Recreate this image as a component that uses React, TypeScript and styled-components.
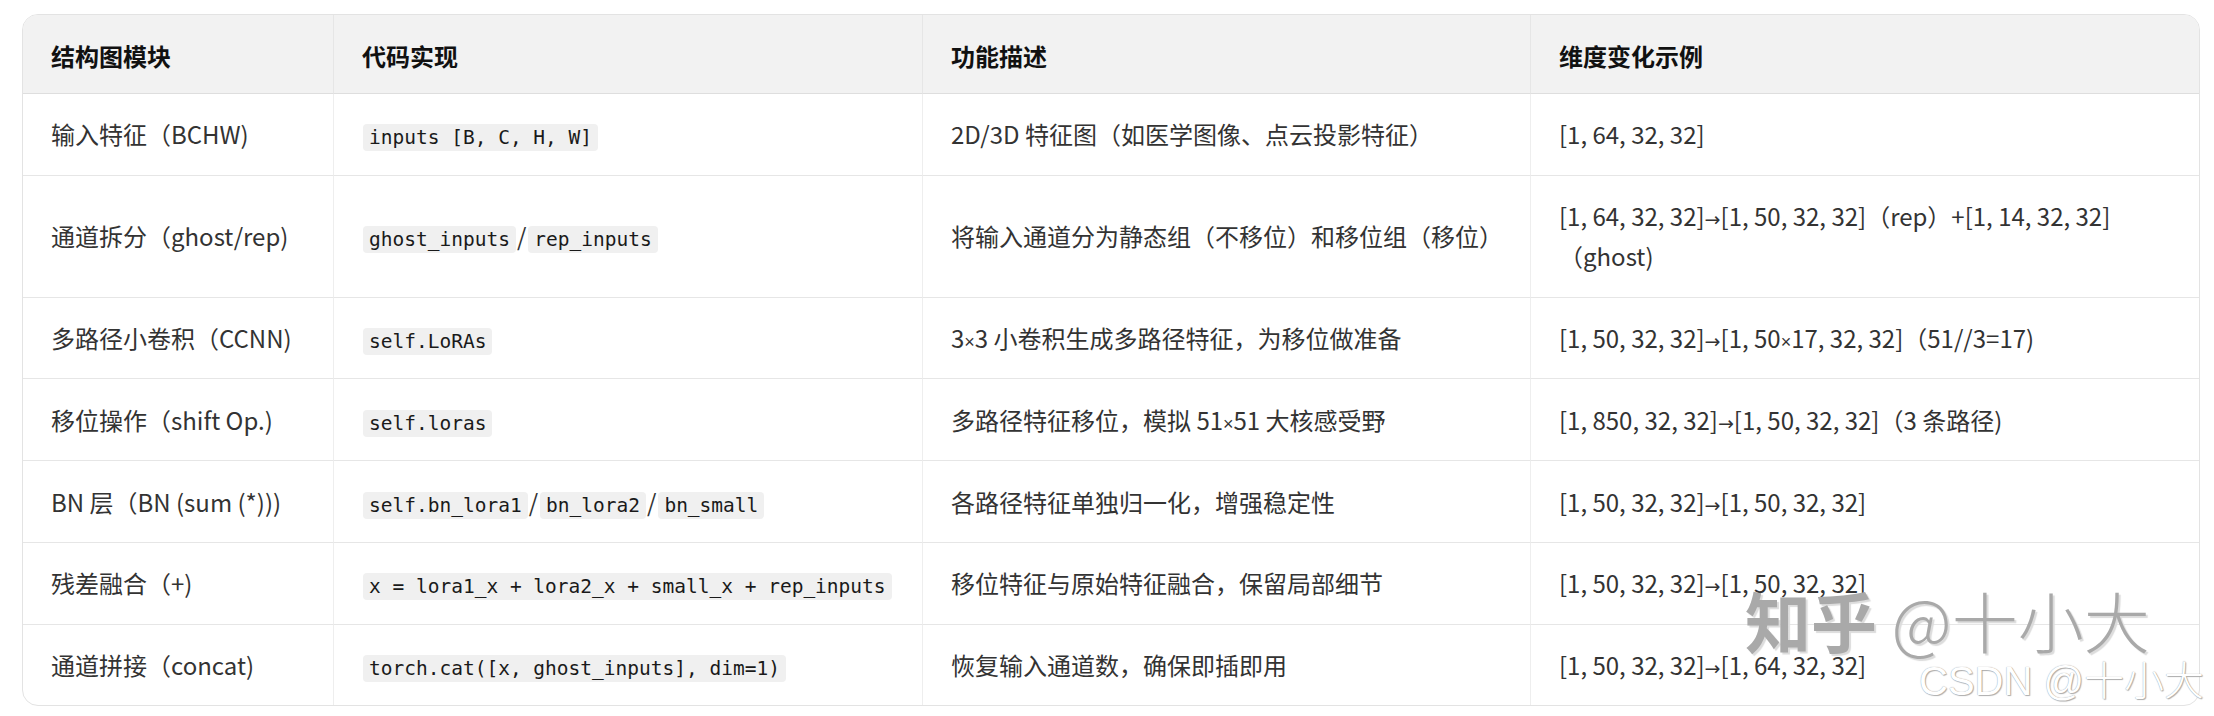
import React from "react";
import styled, { createGlobalStyle } from "styled-components";

interface Row {
    module: string;
    code: string[];
    desc: string;
    dims: string;
}

const rows: Row[] = [
    {
        module: "输入特征（BCHW)",
        code: ["inputs [B, C, H, W]"],
        desc: "2D/3D 特征图（如医学图像、点云投影特征）",
        dims: "[1, 64, 32, 32]",
    },
    {
        module: "通道拆分（ghost/rep)",
        code: ["ghost_inputs", "rep_inputs"],
        desc: "将输入通道分为静态组（不移位）和移位组（移位）",
        dims: "[1, 64, 32, 32]→[1, 50, 32, 32]（rep）+[1, 14, 32, 32]（ghost)",
    },
    {
        module: "多路径小卷积（CCNN)",
        code: ["self.LoRAs"],
        desc: "3×3 小卷积生成多路径特征，为移位做准备",
        dims: "[1, 50, 32, 32]→[1, 50×17, 32, 32]（51//3=17)",
    },
    {
        module: "移位操作（shift Op.)",
        code: ["self.loras"],
        desc: "多路径特征移位，模拟 51×51 大核感受野",
        dims: "[1, 850, 32, 32]→[1, 50, 32, 32]（3 条路径)",
    },
    {
        module: "BN 层（BN (sum (*)))",
        code: ["self.bn_lora1", "bn_lora2", "bn_small"],
        desc: "各路径特征单独归一化，增强稳定性",
        dims: "[1, 50, 32, 32]→[1, 50, 32, 32]",
    },
    {
        module: "残差融合（+)",
        code: ["x = lora1_x + lora2_x + small_x + rep_inputs"],
        desc: "移位特征与原始特征融合，保留局部细节",
        dims: "[1, 50, 32, 32]→[1, 50, 32, 32]",
    },
    {
        module: "通道拼接（concat)",
        code: ["torch.cat([x, ghost_inputs], dim=1)"],
        desc: "恢复输入通道数，确保即插即用",
        dims: "[1, 50, 32, 32]→[1, 64, 32, 32]",
    },
];

const colWidths = [310, 589, 608, 669];

// × and → are narrow in the source font, the CJK font draws them full width
const withSymbols = (text: string) =>
    text.split(/([→×])/).map((part, i) =>
        part === "→" ? (
            <Arrow key={i}>{part}</Arrow>
        ) : part === "×" ? (
            <Times key={i}>{part}</Times>
        ) : (
            part
        )
    );

const App: React.FC = () => {
    return (
        <Page>
            <GlobalStyle />
            <TableWrap>
                <Table>
                    <colgroup>
                        {colWidths.map((w, i) => (
                            <col key={i} style={{ width: w }} />
                        ))}
                    </colgroup>
                    <thead>
                        <tr>
                            <HeadCell>结构图模块</HeadCell>
                            <HeadCell>代码实现</HeadCell>
                            <HeadCell>功能描述</HeadCell>
                            <HeadCell>维度变化示例</HeadCell>
                        </tr>
                    </thead>
                    <tbody>
                        {rows.map((r) => (
                            <BodyRow key={r.module}>
                                <Cell>{r.module}</Cell>
                                <Cell>
                                    {r.code.map((c, i) => (
                                        <React.Fragment key={c}>
                                            {i > 0 && <Slash>/</Slash>}
                                            <Code>{c}</Code>
                                        </React.Fragment>
                                    ))}
                                </Cell>
                                <Cell>{withSymbols(r.desc)}</Cell>
                                <Cell>{withSymbols(r.dims)}</Cell>
                            </BodyRow>
                        ))}
                    </tbody>
                </Table>
            </TableWrap>
            <Watermark>
                <ZhihuMark>
                    <b>知乎</b> @十小大
                </ZhihuMark>
                <CsdnMark>CSDN @十小大</CsdnMark>
            </Watermark>
        </Page>
    );
};

const GlobalStyle = createGlobalStyle`
  html, body {
    margin: 0;
    padding: 0;
    background: #ffffff;
  }
  body {
    font-family: "Noto Sans CJK SC", sans-serif;
  }
`;

const Page = styled.div`
  position: relative;
  width: 2214px;
  height: 716px;
  box-sizing: border-box;
  padding: 14px 14px 0 22px;
  overflow: hidden;
`;

const TableWrap = styled.div`
  width: 2178px;
  box-sizing: border-box;
  border: 1px solid #e3e3e3;
  border-radius: 16px;
  overflow: hidden;
`;

const Table = styled.table`
  width: 100%;
  table-layout: fixed;
  border-collapse: separate;
  border-spacing: 0;
  font-family: "Noto Sans CJK SC", sans-serif;
  font-size: 24px;
  line-height: 40px;
`;

const HeadCell = styled.th`
  background: #f2f2f2;
  color: #111111;
  font-weight: 700;
  text-align: left;
  padding: 21px 28px 17px;
  border-bottom: 1px solid #dedede;
  & + & {
    border-left: 1px solid #e6e6e6;
  }
`;

const Cell = styled.td`
  color: #333333;
  padding: 20.4px 28px;
  vertical-align: middle;
  border-bottom: 1px solid #e6e6e6;
  & + & {
    border-left: 1px solid #eeeeee;
  }
`;

const BodyRow = styled.tr`
  &:last-child ${Cell} {
    border-bottom: none;
  }
`;

const Code = styled.code`
  font-family: "DejaVu Sans Mono", monospace;
  font-size: 19.5px;
  line-height: 1;
  color: #1a1a1a;
  background: #f0f0f0;
  border-radius: 4px;
  padding: 2px 6px;
  margin-left: 1px;
`;

const Slash = styled.span`
  color: #333333;
  margin: 0 1px;
`;

const Arrow = styled.span`
  font-family: "DejaVu Sans", sans-serif;
  font-size: 19px;
  line-height: 1;
`;

const Times = styled.span`
  font-family: "Liberation Sans", sans-serif;
  font-size: 18px;
  line-height: 1;
`;

const Watermark = styled.div`
  position: absolute;
  left: 1745px;
  top: 581px;
  pointer-events: none;
  display: flex;
  flex-direction: column;
`;

const ZhihuMark = styled.div`
  font-family: "Noto Sans CJK SC", sans-serif;
  font-size: 66px;
  font-weight: 300;
  line-height: 76px;
  color: #a9a9a9;
  text-shadow: 2px 2px 1px #dcdcdc;
  white-space: nowrap;

  b {
    font-weight: 700;
  }
`;

const CsdnMark = styled.div`
  margin: 2px 0 0 174px;
  font-family: "Liberation Sans", "Noto Sans CJK SC", sans-serif;
  font-size: 40px;
  font-weight: 300;
  line-height: 44px;
  color: #ffffff;
  text-shadow: 0 0 1px #8c8c8c, 1px 1px 1px #b0b0b0;
  white-space: nowrap;
`;

export default App;
